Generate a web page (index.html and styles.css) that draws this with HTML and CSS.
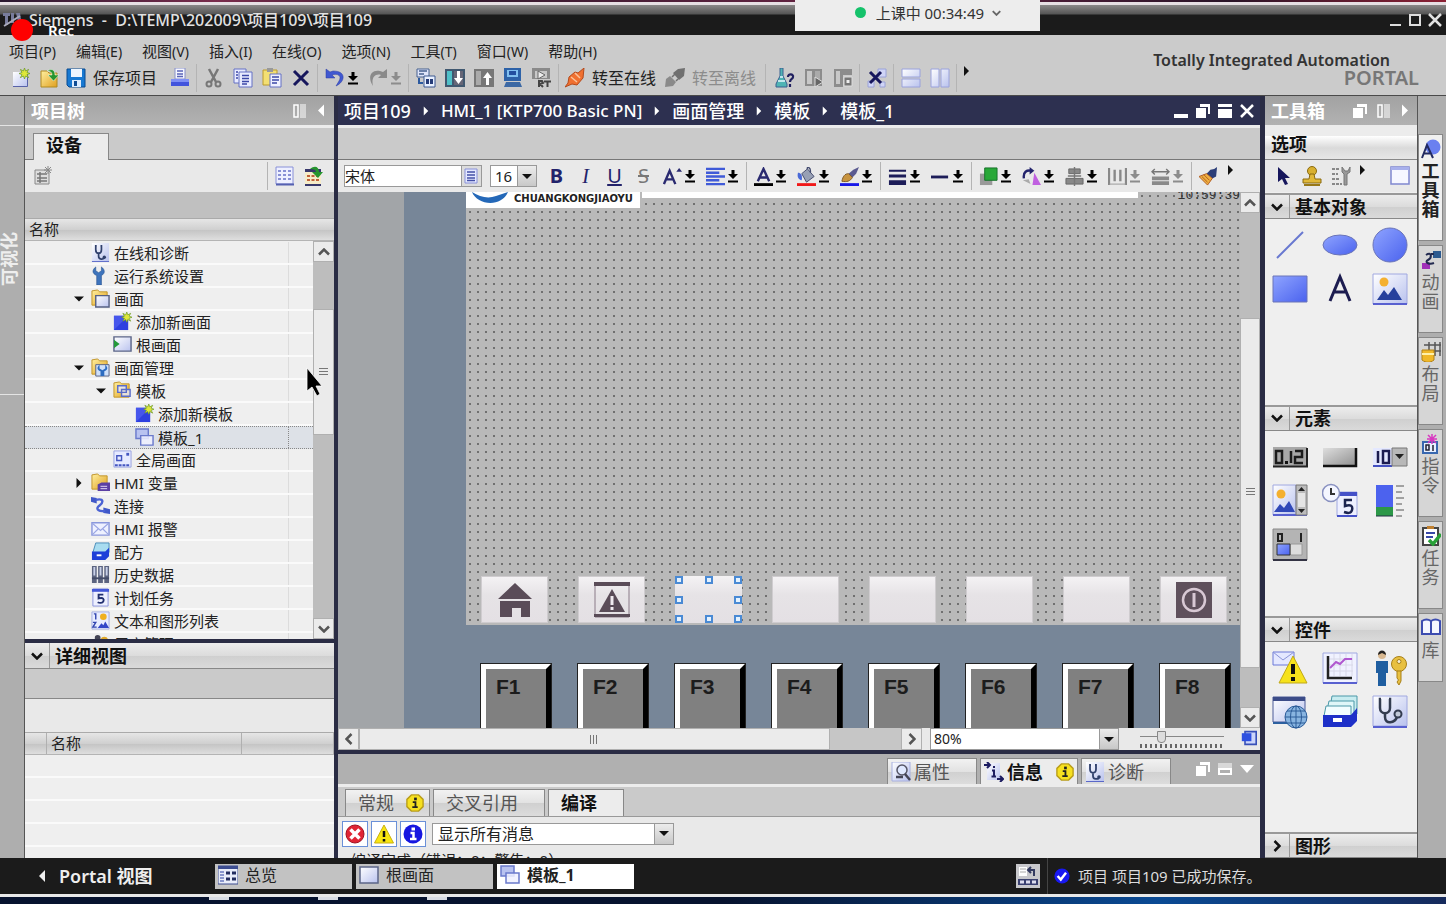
FILE: index.html
```html
<!DOCTYPE html>
<html lang="zh-CN">
  <head>
    <meta charset="UTF-8" />
    <meta name="viewport" content="width=device-width, initial-scale=1.0" />
    <title>Siemens - 项目109</title>
    <link rel="stylesheet" href="styles.css">
  </head>
  <body>
    <!-- icon sprite -->
    <svg class="sprite" width="0" height="0" aria-hidden="true">
      <defs>
        <linearGradient id="gBlue" x1="0" y1="0" x2="1" y2="1"><stop offset="0" stop-color="#8fa4ff" /><stop offset="1" stop-color="#4a62ee" /></linearGradient>
        <linearGradient id="gPale" x1="0" y1="0" x2="1" y2="1"><stop offset="0" stop-color="#ffffff" /><stop offset="1" stop-color="#b9c2ee" /></linearGradient>
        <linearGradient id="gGrey" x1="0" y1="0" x2="1" y2="1"><stop offset="0" stop-color="#dedede" /><stop offset="1" stop-color="#8e8e8e" /></linearGradient>
        <linearGradient id="gGold" x1="0" y1="0" x2="1" y2="1"><stop offset="0" stop-color="#fff0a0" /><stop offset="1" stop-color="#e0a020" /></linearGradient>
      </defs>
      <symbol id="i-drop" viewBox="0 0 10 14"><path d="M3.500 1h3v4H10L5 10 0 5h3.500zM0 11.500h10v2H0z" /></symbol>
      <symbol id="i-right" viewBox="0 0 8 12"><path d="M1 0l6 6-6 6z" /></symbol>
      <symbol id="i-left" viewBox="0 0 8 12"><path d="M7 0L1 6l6 6z" /></symbol>
      <symbol id="i-down" viewBox="0 0 12 8"><path d="M0 1h12L6 7z" /></symbol>
      <symbol id="i-chev" viewBox="0 0 12 8"><path d="M1 1.500l5 5 5-5" fill="none" stroke="currentColor" stroke-width="2.500" /></symbol>
      <symbol id="i-star" viewBox="0 0 12 12"><path d="M6 0l1.200 3.300L10.500 1.500 8.700 4.800 12 6 8.700 7.200l1.800 3.300-3.300-1.800L6 12 4.800 8.700 1.500 10.500l1.800-3.300L0 6l3.300-1.200L1.500 1.500l3.300 1.800z" fill="#dfe83a" stroke="#6c9a2a" stroke-width=".8" /></symbol>
      <symbol id="i-tia" viewBox="0 0 20 20"><path d="M1 3h7v3H6v9H3V6H1zM9 3h3v10H9zM14 3h4l2 13h-3z" fill="#787c9c" /><path d="M2 16L18 6" stroke="#aab" stroke-width="2" /></symbol>
      <symbol id="i-new" viewBox="0 0 20 20"><path d="M2 4h14v15H2z" fill="url(#gPale)" /><path d="M2 18.500h14.500V5" fill="none" stroke="#5862a8" /><use href="#i-star" x="8" y="0" width="11" height="11" /></symbol>
      <symbol id="i-open" viewBox="0 0 20 20"><path d="M1 3h6l2 2h8v14H1z" fill="url(#gGold)" stroke="#b08a20" /><path d="M7 3c5-3 8-1 8 4h4l-5.500 6L8 7h4c0-3-2-4-5-4z" fill="#27952f" stroke="#fff" stroke-width=".5" /></symbol>
      <symbol id="i-save" viewBox="0 0 20 20"><path d="M1 1h18v18H3l-2-2z" fill="#1879d2" stroke="#094a90" /><path d="M5 1h11v8H5z" fill="#eef6ff" /><path d="M6 12h9v7H6z" fill="#dcecff" /><path d="M8 13h3v5H8z" fill="#0f4c94" /></symbol>
      <symbol id="i-print" viewBox="0 0 20 20"><path d="M5 0h10v11H5z" fill="#f5f6ff" stroke="#8890c8" /><path d="M7 3h6M7 6h6M7 8.500h6" stroke="#5a64b8" stroke-width="1.500" /><path d="M1 11h18v7H1z" fill="#4254dd" /><path d="M1 11h18v3H1z" fill="#7f8ff5" /></symbol>
      <symbol id="i-cut" viewBox="0 0 20 20"><path d="M5 1l7 13M14 1L7 14" stroke="#777" stroke-width="2.500" /><circle cx="5" cy="16" r="2.500" fill="none" stroke="#777" stroke-width="2" /><circle cx="14" cy="16" r="2.500" fill="none" stroke="#777" stroke-width="2" /></symbol>
      <symbol id="i-copy" viewBox="0 0 20 20"><path d="M1 1h12v14H1z" fill="#e8ebff" stroke="#6470c4" /><path d="M6 4h13v15H6z" fill="#e8ebff" stroke="#6470c4" /><path d="M3 4h2M3 7h2M3 10h2M9 7.500h7M9 10.500h7M9 13.500h7M9 16h5" stroke="#3c48a8" stroke-width="1.500" /></symbol>
      <symbol id="i-paste" viewBox="0 0 20 20"><path d="M1 2h14v15H1z" fill="#f3df72" stroke="#bb9b2c" /><path d="M5 0h6v4H5z" fill="#999" /><path d="M8 6h11v13H8z" fill="#eef0ff" stroke="#6470c4" /><path d="M10 9h7M10 12h7M10 15h5" stroke="#3c48a8" stroke-width="1.500" /></symbol>
      <symbol id="i-x" viewBox="0 0 20 20"><path d="M3 3l14 14M17 3L3 17" stroke="#16165c" stroke-width="3" /></symbol>
      <symbol id="i-undo" viewBox="0 0 20 20"><path d="M1 1v9h9L7 7c6-2 10 1 7 6l-3 5c9-4 11-15-3-15L5 4z" fill="#4058d0" stroke="#2a3aa0" stroke-width=".5" /></symbol>
      <symbol id="i-redo" viewBox="0 0 20 20"><path d="M19 1v9h-9l3-3C7 5 3 10 5 18-1 9 3 1 12 3l3 1z" fill="#8a8a8a" /></symbol>
      <symbol id="i-compile" viewBox="0 0 20 20"><path d="M1 1h12v8H1z" fill="#dfe5fa" stroke="#47608f" /><path d="M3 3h8M3 6h5" stroke="#47608f" stroke-width="1.500" /><path d="M8 8h11v11H8z" fill="#e8f0ff" stroke="#3c5890" /><path d="M10 11h3v5h-3zM14 11h3v5h-3z" fill="#263c78" /><path d="M3 10v5h4" fill="none" stroke="#2c5aa0" stroke-width="2" /></symbol>
      <symbol id="i-load" viewBox="0 0 20 20"><path d="M0 1h20v18H0z" fill="#405870" /><path d="M2 3h5v14H2z" fill="#4fc0c8" /><path d="M9 3h9v14H9z" fill="#667" /><path d="M12 3h3v7h3l-4.500 6L9 10h3z" fill="#fff" /></symbol>
      <symbol id="i-upload" viewBox="0 0 20 20"><path d="M0 1h20v18H0z" fill="#777" /><path d="M2 3h5v14H2z" fill="#aaa" /><path d="M12 17h3v-7h3l-4.500-6L9 10h3z" fill="#fff" /></symbol>
      <symbol id="i-sim" viewBox="0 0 20 20"><path d="M1 0h17v13H1z" fill="#2d62a8" /><path d="M4 2h11v7H4z" fill="#80c0f0" /><path d="M6 3h7v4H6z" fill="#2350a0" /><path d="M3 14h14l2 5H1z" fill="#3b68a4" /></symbol>
      <symbol id="i-rt" viewBox="0 0 20 20"><path d="M0 0h18v11H0z" fill="#8a8a8a" /><path d="M3 3h12v7H3z" fill="#c8c8c8" /><path d="M6 3l7 4-7 4z" fill="#eee" stroke="#666" /><path d="M7 19v-6h3l1 2-3 1 3 3M12 13.500h7M15.500 14v5" fill="none" stroke="#444" stroke-width="2" /></symbol>
      <symbol id="i-plug" viewBox="0 0 20 20"><path d="M0 19l3-4 1-6 6-5 3 1 6-5-1 10-6 7-5-1z" fill="#f07030" stroke="#b44a1c" /><path d="M6 9l6 5M10 5l5 5" stroke="#fbc29a" stroke-width="1.500" /></symbol>
      <symbol id="i-unplug" viewBox="0 0 20 20"><path d="M0 19l1-8 4-3 6 6-3 4z" fill="#8a8a8a" /><path d="M8 5l5-4 7-1-1 8-5 4z" fill="#707070" /><path d="M7 9l3-3M11 13l2-2" stroke="#707070" stroke-width="1.500" /></symbol>
      <symbol id="i-diag" viewBox="0 0 20 20"><path d="M5 0h3v8l4 8v3H1v-3l4-8z" fill="#4fb4b4" stroke="#3a6090" /><path d="M3 13h7M5 9h3" stroke="#e9f9ff" stroke-width="1.500" /><path d="M13 9c0-4 6-3 5 0 0 2-3 2-3 5M15 16v3" fill="none" stroke="#202060" stroke-width="2.200" /></symbol>
      <symbol id="i-start" viewBox="0 0 20 20"><path d="M1 1h17v17H1z" fill="#8c8c8c" /><path d="M3 3h5v13H3z" fill="#c8c8c8" /><path d="M11 3h5v8h-5z" fill="#aaa" /><path d="M11 9l8 5-8 5z" fill="#666" stroke="#ddd" /></symbol>
      <symbol id="i-stop" viewBox="0 0 20 20"><path d="M1 1h18v6h-9v12H1z" fill="#8c8c8c" /><path d="M3 3h4v13H3z" fill="#c8c8c8" /><path d="M11 9h8v9h-8z" fill="#777" stroke="#ddd" /><path d="M13.500 12h3v3h-3z" fill="#eee" /></symbol>
      <symbol id="i-xref" viewBox="0 0 20 20"><path d="M11 1h8v8h-8zM1 13h6v6H1zM13 14h5v5h-5z" fill="#cfd4f6" stroke="#9aa2d8" /><path d="M3 4l11 11M14 4L3 15" stroke="#16165c" stroke-width="3" /></symbol>
      <symbol id="i-splith" viewBox="0 0 20 20"><path d="M1 1h18v8H1zM1 11h18v8H1z" fill="url(#gPale)" stroke="#9aa2dc" /></symbol>
      <symbol id="i-splitv" viewBox="0 0 20 20"><path d="M1 1h8v18H1zM11 1h8v18h-8z" fill="url(#gPale)" stroke="#9aa2dc" /></symbol>
      <symbol id="i-min" viewBox="0 0 14 14"><path d="M0 10h14v4H0z" /></symbol>
      <symbol id="i-float" viewBox="0 0 14 14"><path d="M4 0h10v10h-2V3H4z" /><path d="M0 4h10v10H0z" /></symbol>
      <symbol id="i-max" viewBox="0 0 14 14"><path d="M0 0h14v3H0zM0 5h14v9H0z" /></symbol>
      <symbol id="i-close" viewBox="0 0 14 14"><path d="M1 1l12 12M13 1L1 13" stroke="currentColor" stroke-width="2.500" /></symbol>
      <symbol id="i-dock" viewBox="0 0 14 14"><path d="M1 1h4v12H1z" fill="none" stroke="currentColor" stroke-width="1.500" /><path d="M7 0h6v14H7z" opacity=".5" /></symbol>
      <symbol id="i-treenew" viewBox="0 0 20 20"><path d="M2 4h14v14H2z" fill="#ddd" stroke="#888" /><path d="M4 8h10M4 12h10M4 15h10M7 6v11" stroke="#777" stroke-width="1.500" /><path d="M15 0v8M11 4h8M12 1l6 6M18 1l-6 6" stroke="#888" /></symbol>
      <symbol id="i-table" viewBox="0 0 20 20"><path d="M1 1h17v17H1z" fill="#eef0ff" stroke="#8890d8" /><path d="M1 18.500h18" stroke="#5560b0" stroke-width="2" /><path d="M3 5h13M3 9h13M3 13h13" stroke="#6872c8" stroke-width="1.500" stroke-dasharray="3 2" /></symbol>
      <symbol id="i-tableopen" viewBox="0 0 20 20"><path d="M1 3h16v16H1z" fill="#f6ecc8" /><path d="M1 3h16v3H1zM1 18h16v2H1z" fill="#38386c" /><path d="M3 10h12M3 14h12" stroke="#c06038" stroke-width="2" stroke-dasharray="3 1.500" /><path d="M6 3c5-4 9-2 9 3h4l-5 6-6-6h4c0-2-2-3-6-3z" fill="#27952f" /></symbol>
      <symbol id="i-steth" viewBox="0 0 20 20"><path d="M1 0h18v19H1z" fill="url(#gPale)" /><path d="M1 19.500h18" stroke="#5a68c8" /><path d="M6 3H5v4c0 5 6 5 6 0V3h-1M8 11v3c0 4 5 3 6 2" fill="none" stroke="#30406c" stroke-width="1.800" /><circle cx="14" cy="15" r="1.800" fill="#30406c" /></symbol>
      <symbol id="i-wrench" viewBox="0 0 20 20"><path d="M5 1v4l3 2 3-2V1c4 3 4 7 0 9v10H6V10C1 8 1 4 5 1z" fill="#3e74bc" stroke="#26508c" stroke-width=".6" /></symbol>
      <symbol id="i-folder" viewBox="0 0 20 20"><path d="M1 17V2l6-1 2 2h8v14z" fill="url(#gGold)" stroke="#c09428" /></symbol>
      <symbol id="i-fscreen" viewBox="0 0 20 20"><use href="#i-folder" /><path d="M5 7h14v12H5z" fill="url(#gPale)" stroke="#566084" stroke-width="1.500" /></symbol>
      <symbol id="i-fwrench" viewBox="0 0 20 20"><use href="#i-folder" /><path d="M5 7h14v12H5z" fill="#cfe0fa" stroke="#566084" /><path d="M9 7v4l3 2 3-2V7c3 3 3 5-1 7v5h-4v-5c-4-2-4-4-1-7z" fill="#2d6cc0" /></symbol>
      <symbol id="i-ftpl" viewBox="0 0 20 20"><use href="#i-folder" /><path d="M5 5h9v7H5zM9 9h9v7H9z" fill="#e8ecff" fill-opacity=".8" stroke="#5a6cc8" stroke-width="1.500" /></symbol>
      <symbol id="i-fvar" viewBox="0 0 20 20"><use href="#i-folder" /><path d="M7 12l4-2h9v9H7z" fill="#5b3fa4" /><path d="M10 14h7M10 16.500h7" stroke="#e8defa" /></symbol>
      <symbol id="i-add" viewBox="0 0 20 20"><path d="M1 4h15v15H1z" fill="#2e40e0" /><path d="M1 4h15L1 19z" fill="#4656ec" /><use href="#i-star" x="9" y="0" width="11" height="11" /></symbol>
      <symbol id="i-root" viewBox="0 0 20 20"><path d="M1 2h18v15H1z" fill="url(#gPale)" stroke="#5c6688" stroke-width="1.500" /><path d="M1 5l6 4.500L1 14z" fill="#249a3a" /></symbol>
      <symbol id="i-tpl" viewBox="0 0 20 20"><path d="M1 1h13v10H1z" fill="#b8c2f0" stroke="#6a7acc" stroke-width="1.500" /><path d="M6 8h13v10H6z" fill="#eef0ff" fill-opacity=".85" stroke="#6a7acc" stroke-width="1.500" /></symbol>
      <symbol id="i-global" viewBox="0 0 20 20"><path d="M1 1h18v17H1z" fill="#e6eaff" stroke="#98a2e0" /><path d="M4 6h5v5H4z" fill="none" stroke="#4456c0" stroke-width="1.500" /><path d="M14 3h3v3h-3z" fill="#4456c0" /><path d="M2 16h16" stroke="#4456c0" stroke-width="2" stroke-dasharray="3 1" /></symbol>
      <symbol id="i-conn" viewBox="0 0 20 20"><path d="M0 1l6 1v6L0 6zM13 12l7 2v5l-7-1z" fill="#4058c8" /><path d="M5 4c9-2 8 3 4 6s-3 6 6 6" fill="none" stroke="#4a62d4" stroke-width="2.500" /></symbol>
      <symbol id="i-mail" viewBox="0 0 20 20"><path d="M1 4h18v13H1z" fill="#eef1ff" stroke="#8a98dc" stroke-width="1.500" /><path d="M2 5l8 7 8-7M2 16l6-6M18 16l-6-6" fill="none" stroke="#9aa6e4" stroke-width="1.200" /></symbol>
      <symbol id="i-recipe" viewBox="0 0 20 20"><path d="M5 1h14v10H2z" fill="#a8dcf0" stroke="#4a8cb8" /><path d="M1 10h14l4-4v9l-4 4H1z" fill="#1e40d8" /><path d="M6 13h5v2H6z" fill="#fff" /></symbol>
      <symbol id="i-hist" viewBox="0 0 20 20"><path d="M1 1h5v18H1zM7.500 1h5v18h-5zM14 1h5v18h-5z" fill="#5c6480" /><path d="M2.500 2h2v9h-2zM9 2h2v9H9zM15.500 2h2v9h-2z" fill="#c8d0e8" /><path d="M1 13h18v2H1z" fill="#444c68" /></symbol>
      <symbol id="i-cal" viewBox="0 0 20 20"><path d="M2 1h16v18H2z" fill="#eef0ff" stroke="#8a94dc" /><path d="M1 1h18v3H1z" fill="#4458d8" /><path d="M13 7H8v4c5-1.500 6 1 5 3s-4 2-6 1" fill="none" stroke="#223070" stroke-width="2" /></symbol>
      <symbol id="i-list" viewBox="0 0 20 20"><path d="M1 1h18v18H1z" fill="#e8ecff" stroke="#a4aee0" /><path d="M3 3h2v6M2 12h3l-3 5h4" fill="none" stroke="#3346b0" stroke-width="1.500" /><circle cx="13" cy="6" r="3.500" fill="#f0b020" /><path d="M7 18l4-5 2 2 2-4 4 7z" fill="#3346c8" /></symbol>
      <symbol id="i-user" viewBox="0 0 20 20"><circle cx="7" cy="4" r="3" fill="#445" /><circle cx="14" cy="7" r="4" fill="#e0a828" /></symbol>
      <symbol id="i-bigger" viewBox="0 0 20 20"><path d="M1 18L7 4l6 14M3.500 13h7" fill="none" stroke="#2a2a70" stroke-width="2.500" /><path d="M14 5l3-4 3 4z" fill="#2a2a70" /></symbol>
      <symbol id="i-align" viewBox="0 0 20 20"><path d="M0 2h20M0 6h14M0 10h20M0 14h14M0 18h20" stroke="#3f5ad8" stroke-width="2.500" /></symbol>
      <symbol id="i-fontc" viewBox="0 0 20 20"><path d="M4 15l6-13 6 13M6 11h8" fill="none" stroke="#2a2a70" stroke-width="2.500" /><path d="M0 17h20v3H0z" fill="#000" /></symbol>
      <symbol id="i-fill" viewBox="0 0 20 20"><path d="M5 7l6-5 7 8-8 6z" fill="#98a0b4" stroke="#444c70" /><path d="M11 2c-1-3 4-2 3 4" fill="none" stroke="#444c70" stroke-width="1.500" /><path d="M1 6c3 0 5 2 4 8-4-1-5-4-4-8z" fill="#4a6ad8" /><path d="M0 17h20v3H0z" fill="#f01818" /></symbol>
      <symbol id="i-pen" viewBox="0 0 20 20"><path d="M20 0l-3 7-4 4-4-4 5-4z" fill="#5a5a90" /><path d="M9 7l4 4c-2 4-6 5-11 4 1-5 3-8 7-8z" fill="#c89440" stroke="#7a5420" /><path d="M0 17h20v3H0z" fill="#1818e8" /></symbol>
      <symbol id="i-lines" viewBox="0 0 20 20"><path d="M1 3h18v2H1zM1 8h18v3H1zM1 14h18v5H1z" fill="#1c1c58" /></symbol>
      <symbol id="i-dash" viewBox="0 0 20 20"><path d="M0 9h18v3H0z" fill="#1c1c58" /></symbol>
      <symbol id="i-order" viewBox="0 0 20 20"><path d="M1 7h13v12H1z" fill="#999" /><path d="M6 1h13v13H6z" fill="#28a838" stroke="#17722a" /></symbol>
      <symbol id="i-rot" viewBox="0 0 20 20"><path d="M11 19l2-13 7 13z" fill="#c060e0" /><path d="M9 18L1 14l6-1z" fill="#aaa" /><path d="M2 12C1 5 5 3 10 4" fill="none" stroke="#24246c" stroke-width="2.500" /><path d="M8 0l5 4-5 4z" fill="#24246c" /></symbol>
      <symbol id="i-center" viewBox="0 0 20 20"><path d="M4 2h12v5H4zM1 12h18v6H1z" fill="#888" stroke="#666" /><path d="M10 0v20M3 9.500h14" stroke="#777" stroke-width="1.500" /></symbol>
      <symbol id="i-dist" viewBox="0 0 20 20"><path d="M1 1v18M7 3v12M13 3v12M19 1v18" stroke="#888" stroke-width="2.500" /><path d="M1 18h18" stroke="#999" /></symbol>
      <symbol id="i-samew" viewBox="0 0 20 20"><path d="M1 10h18v4H1zM1 15h18v4H1z" fill="#8a8a8a" /><path d="M1 5h18M4 2L1 5l3 3M16 2l3 3-3 3" fill="none" stroke="#777" stroke-width="1.500" /></symbol>
      <symbol id="i-brush" viewBox="0 0 20 20"><path d="M19 0l-1 10-4 2-6-5 4-4 4-1z" fill="#2c3e78" /><path d="M8 7l6 5-5 7-9-9z" fill="#eeb040" stroke="#b05a20" /><path d="M3 10l6 6M5 8l6 6" stroke="#b05a20" /></symbol>
      <symbol id="i-cursor" viewBox="0 0 20 20"><path d="M5 1v15l4-3 3 6 3-1-3-6h5z" fill="#16165c" /></symbol>
      <symbol id="i-stamp" viewBox="0 0 20 20"><circle cx="10" cy="5" r="4.500" fill="#d8b030" stroke="#8a6a10" /><path d="M8 8h4l1 5h6v4H1v-4h6z" fill="#e0b838" stroke="#8a6a10" /><path d="M2 19h16" stroke="#987818" stroke-width="2" /></symbol>
      <symbol id="i-opts" viewBox="0 0 20 20"><path d="M1 3h8M1 8h6M1 13h8M1 18h10" stroke="#888" stroke-width="2" stroke-dasharray="3 1" /><path d="M11 1v5l2 2v11h3V8l3-2V1l-2 4h-3z" fill="#999" stroke="#777" /></symbol>
      <symbol id="i-window" viewBox="0 0 20 20"><path d="M1 1h18v17H1z" fill="#f6f7ff" stroke="#8088d0" stroke-width="1.500" /><path d="M1 1h18v3H1z" fill="#a8b0ec" /></symbol>
      <symbol id="i-lens" viewBox="0 0 20 20"><path d="M1 0h18v19H1z" fill="url(#gPale)" stroke="#a8b0e0" /><circle cx="11" cy="8" r="5" fill="#dfe8ff" stroke="#556" stroke-width="1.500" /><path d="M14 12l5 6M5 15h7" stroke="#445" stroke-width="2.500" /></symbol>
      <symbol id="i-msg" viewBox="0 0 20 20"><path d="M3 1h13v17H3z" fill="url(#gPale)" /><path d="M0 3h5M3 0l3 3-3 3M13 17h6M16 14l3 3-3 3" fill="none" stroke="#1c1c60" stroke-width="2" /><path d="M8 8.500h2v6M7.500 14.500H12" fill="none" stroke="#1c1c60" stroke-width="2" /><path d="M9 4h2v2H9z" fill="#1c1c60" /></symbol>
      <symbol id="i-info" viewBox="0 0 20 20"><path d="M6 1h8l5 5v8l-5 5H6l-5-5V6z" fill="#f6e020" stroke="#b89c18" stroke-width="1.500" /><path d="M7.500 9h3v5.500M7 14.500h6" fill="none" stroke="#222" stroke-width="2" /><path d="M9 4h3v3H9z" fill="#222" /></symbol>
      <symbol id="i-err" viewBox="0 0 20 20"><circle cx="10" cy="10" r="9" fill="#e02434" stroke="#a01020" /><path d="M5.500 5.500l9 9M14.500 5.500l-9 9" stroke="#fff" stroke-width="3.500" /></symbol>
      <symbol id="i-warn" viewBox="0 0 20 20"><path d="M10 1l9.500 18H.5z" fill="#f8e610" stroke="#c8b010" /><path d="M10 7v6M10 15v2.500" stroke="#111" stroke-width="2.500" /></symbol>
      <symbol id="i-note" viewBox="0 0 20 20"><circle cx="10" cy="10" r="9.500" fill="#1616e0" /><path d="M7.500 9h3v6M7 15h6.500" fill="none" stroke="#fff" stroke-width="2.500" /><path d="M8.500 3.500h3.500v3H8.500z" fill="#fff" /></symbol>
      <symbol id="i-ok" viewBox="0 0 20 20"><circle cx="10" cy="10" r="9.500" fill="#1818f0" /><path d="M4.500 10l4 4.500L15 6" fill="none" stroke="#fff" stroke-width="3" /></symbol>
      <symbol id="i-overview" viewBox="0 0 20 20"><path d="M0 1h20v18H0z" fill="#e8ecfa" stroke="#3c4c90" /><path d="M0 1h20v3H0z" fill="#3c4c90" /><path d="M2 7h4M2 10h4M2 13h4M2 16h4" stroke="#6a7ac0" stroke-width="1.500" /><path d="M8 8h4M14 8h4M8 14h4M14 14h4" stroke="#222c60" stroke-width="3" /></symbol>
      <symbol id="i-screen" viewBox="0 0 20 20"><path d="M1 2h18v16H1z" fill="url(#gPale)" stroke="#5c6688" stroke-width="1.500" /></symbol>
      <symbol id="i-layout" viewBox="0 0 24 24"><path d="M0 0h24v24H0z" fill="#c8c8cc" /><path d="M3 3h8v9H3z" fill="#fff" /><path d="M4 5h6M4 8h6" stroke="#aaa" /><path d="M13 6h5v6M15 3l-3 3 3 3" fill="none" stroke="#333a60" stroke-width="2" /><path d="M2 15h20v6H2z" fill="#3a4070" /><path d="M4 18h16" stroke="#dde" stroke-width="3" stroke-dasharray="4 2" /></symbol>
      <symbol id="i-fit" viewBox="0 0 20 20"><path d="M5 2h14v16H5z" fill="#cdd6fa" stroke="#3850b8" stroke-width="2" /><path d="M1 4h12v10H1z" fill="#2e50e0" /></symbol>
      <!-- toolbox objects -->
      <symbol id="o-line" viewBox="0 0 36 36"><path d="M5 31L31 5" stroke="#6878d0" stroke-width="2" /></symbol>
      <symbol id="o-ellipse" viewBox="0 0 36 36"><ellipse cx="18" cy="18" rx="17" ry="10" fill="url(#gBlue)" stroke="#6a74b8" /></symbol>
      <symbol id="o-circle" viewBox="0 0 36 36"><circle cx="18" cy="18" r="17" fill="url(#gBlue)" stroke="#6a74b8" /></symbol>
      <symbol id="o-rect" viewBox="0 0 36 36"><path d="M1 5h34v26H1z" fill="url(#gBlue)" stroke="#6a74b8" /></symbol>
      <symbol id="o-text" viewBox="0 0 36 36"><path d="M8 30L18 6l10 24M12 21h12" fill="none" stroke="#1c1c50" stroke-width="3" /></symbol>
      <symbol id="o-image" viewBox="0 0 36 36"><path d="M1 3h34v30H1z" fill="url(#gPale)" stroke="#a0a8e0" /><path d="M1 32h34v2H1z" fill="#5860d0" /><circle cx="12" cy="11" r="4.500" fill="#f4b030" /><path d="M5 29l7-10 4 5 6-8 8 13z" fill="#26409c" /></symbol>
      <symbol id="o-io" viewBox="0 0 36 36"><path d="M1 8h34v20H1z" fill="#a8a8a8" /><path d="M1 27.500h34V9" fill="none" stroke="#222" stroke-width="2" /><path d="M4 12h6v12H4zM19 12v12M23 12h7v6h-7v6h8" fill="none" stroke="#1c1c1c" stroke-width="2.500" /><path d="M13 22h3v3h-3z" fill="#111" /></symbol>
      <symbol id="o-button" viewBox="0 0 36 36"><path d="M1 9h34v18H1z" fill="url(#gGrey)" /><path d="M1 27h33V9" fill="none" stroke="#111" stroke-width="2.500" /></symbol>
      <symbol id="o-symio" viewBox="0 0 36 36"><path d="M1 9h19v17H1z" fill="#e4e8ff" /><path d="M1 27h19" stroke="#4450c0" stroke-width="2" /><path d="M6 12v12M11 12h6v12h-6z" fill="none" stroke="#1c1c50" stroke-width="2.500" /><path d="M20 9h15v18H20z" fill="#b8b8b8" stroke="#777" /><path d="M23 15h9l-4.500 5z" /></symbol>
      <symbol id="o-symimg" viewBox="0 0 36 36"><path d="M1 2h23v30H1z" fill="url(#gPale)" stroke="#a0a8e0" /><path d="M1 31h34v2H1z" fill="#5860d0" /><circle cx="9" cy="11" r="4.500" fill="#f4b030" /><path d="M2 29l6-8 4 4 5-7 6 11z" fill="#3048b8" /><path d="M24 2h11v30H24z" fill="#bbb" stroke="#777" /><path d="M26 10h7v14h-7z" fill="#e4e4e4" /><path d="M26 8l3.500-4L33 8zM26 26l3.500 4 3.500-4z" /></symbol>
      <symbol id="o-date" viewBox="0 0 36 36"><path d="M15 9h20v24H15z" fill="#eef0ff" stroke="#a0a8e0" /><path d="M15 9h20v4H15zM15 32h20v2H15z" fill="#4450c8" /><path d="M30 17h-7v6c6-2 8 0 7 4s-5 3-8 2" fill="none" stroke="#1c2450" stroke-width="2.500" /><circle cx="9" cy="10" r="8.500" fill="#f4f6ff" stroke="#8890c0" stroke-width="1.500" /><path d="M9 5v6h4" fill="none" stroke="#333" stroke-width="2" /></symbol>
      <symbol id="o-bar" viewBox="0 0 36 36"><path d="M4 2h17v23H4z" fill="#4c62ee" /><path d="M4 24h17v9H4z" fill="#2c9848" /><path d="M4 33h17" stroke="#234" /><path d="M24 3h8M24 9h6M24 15h8M24 21h6M24 27h8M24 33h6" stroke="#555" /></symbol>
      <symbol id="o-switch" viewBox="0 0 36 36"><path d="M1 2h34v31H1z" fill="#b4b4b4" stroke="#888" /><path d="M1 33h34" stroke="#334" stroke-width="2" /><path d="M6 7h4v7H6zM29 6v9" fill="none" stroke="#222" stroke-width="2" /><path d="M18 17h12v11H18z" fill="#ddd" stroke="#999" /><path d="M5 17h13v11H5z" fill="url(#gBlue)" stroke="#333" /></symbol>
      <symbol id="o-alarm" viewBox="0 0 36 36"><path d="M1 2h21v13H1z" fill="#e4e8ff" stroke="#6a78d8" /><path d="M1 2l10 8L22 2" fill="none" stroke="#8a94d8" /><path d="M21 6l14 27H7z" fill="#f6e21c" stroke="#c0a818" /><path d="M21 14v10M21 27v4" stroke="#111" stroke-width="4" /></symbol>
      <symbol id="o-trend" viewBox="0 0 36 36"><path d="M1 3h34v30H1z" fill="#f0f2ff" stroke="#a0a8e0" /><path d="M12 4v22M18 4v22M24 4v22M30 4v22M7 9h24M7 15h24M7 21h24" stroke="#d8d8e8" /><path d="M1 33h34" stroke="#5860d0" stroke-width="2" /><path d="M6 6v22h24" fill="none" stroke="#222" stroke-width="2.500" /><path d="M8 18l6-6 4 2 5-5h7" fill="none" stroke="#b058d0" stroke-width="2" /></symbol>
      <symbol id="o-user" viewBox="0 0 36 36"><circle cx="10" cy="5" r="4" fill="#d8b890" /><path d="M6 5c0-6 8-6 8 0L10 3z" fill="#222" /><path d="M4 11h12v12h-2v13H6V23H4z" fill="#1f5ea0" /><circle cx="27" cy="14" r="7.500" fill="#e8c040" stroke="#a88018" /><circle cx="27" cy="11.500" r="2" fill="#f6f0d8" stroke="#a88018" /><path d="M25 21h4v10l-2 4-2-3 1.500-2-1.500-2z" fill="#e8c040" stroke="#a88018" /></symbol>
      <symbol id="o-web" viewBox="0 0 36 36"><path d="M1 3h32v25H1z" fill="url(#gPale)" stroke="#4a5a98" /><path d="M1 3h32v4H1z" fill="#3c4c88" /><path d="M1 29h20" stroke="#2c60a0" stroke-width="2" /><circle cx="24" cy="23" r="11" fill="#88b4e0" stroke="#2c5c98" /><path d="M13 23h22M24 12v22M15 17h18M15 29h18" stroke="#2c5c98" /><ellipse cx="24" cy="23" rx="5.500" ry="11" fill="none" stroke="#2c5c98" /></symbol>
      <symbol id="o-recipe" viewBox="0 0 36 36"><path d="M10 2h25v18H7z" fill="#c8ecf0" stroke="#4a98a8" /><path d="M7 7h25v14H4z" fill="#dff6f8" stroke="#4a98a8" /><path d="M4 12h25v10H2z" fill="#f2fdff" stroke="#4a98a8" /><path d="M1 21h28l6-7v13l-6 6H1z" fill="#1e30c8" /><path d="M11 24h9v4h-9z" fill="#fff" /></symbol>
      <symbol id="o-diag" viewBox="0 0 36 36"><path d="M1 2h34v30H1z" fill="url(#gPale)" stroke="#a0a8e0" /><path d="M1 33h34" stroke="#5860d0" stroke-width="2" /><path d="M9 5H8v9c0 7 10 7 10 0V5h-1M13 19v4c0 8 10 6 12 0" fill="none" stroke="#333c50" stroke-width="2.500" /><circle cx="26" cy="20" r="3.500" fill="#c0c8d8" stroke="#333c50" stroke-width="2" /></symbol>
      <!-- side tabs -->
      <symbol id="t-tools" viewBox="0 0 20 20"><circle cx="12" cy="8" r="7.500" fill="#6a80f0" /><path d="M1 19L6 6l6 13M3 14.500h6" fill="none" stroke="#222a60" stroke-width="2" /></symbol>
      <symbol id="t-anim" viewBox="0 0 20 20"><path d="M12 1h8v7h-8z" fill="#2c5a90" /><path d="M1 13h8v6H1z" fill="#a030b8" /><path d="M5 5c6-4 6 3 2 5s1 5 6 3M10 4h3" fill="none" stroke="#222a50" stroke-width="2" /></symbol>
      <symbol id="t-layout" viewBox="0 0 20 20"><path d="M3 3h17M3 9h17M8 0v14M14 0v14M19 0v14" stroke="#555" stroke-width="1.500" /><path d="M1 8h12v10c-4 3-8 3-12 0z" fill="#f0b828" stroke="#b08018" /><path d="M1 12h12" stroke="#fff0a8" stroke-width="2" /></symbol>
      <symbol id="t-instr" viewBox="0 0 20 20"><path d="M2 8h14v11H2z" fill="#e8f0ff" stroke="#3868b0" stroke-width="2" /><path d="M5 11h3v5H5zM12 11v6" fill="none" stroke="#223" stroke-width="1.500" /><path d="M11 0v10M6 5h10M7 1l8 8M15 1L7 9" stroke="#d838c0" stroke-width="1.500" /></symbol>
      <symbol id="t-task" viewBox="0 0 20 20"><path d="M2 2h15v17H2z" fill="#fff" stroke="#444" stroke-width="2" /><path d="M6 0h7v3H6z" fill="#c08030" /><path d="M5 7h9M5 11h7" stroke="#3848a8" stroke-width="2" /><path d="M8 14l4 4 8-10" fill="none" stroke="#28a038" stroke-width="3.500" /></symbol>
      <symbol id="t-lib" viewBox="0 0 20 20"><path d="M1 3c3-2 6-2 9 0 3-2 6-2 9 0v13H1z" fill="#f4f6ff" stroke="#3c4cb0" stroke-width="2" /><path d="M10 3v13" stroke="#3c4cb0" stroke-width="2" /></symbol>
    </svg>

    <div class="desk-top"></div>

    <header class="titlebar">
      <svg class="icon"><use href="#i-tia" /></svg>
      <span class="app-title">Siemens&nbsp; - &nbsp;D:\TEMP\202009\项目109\项目109</span>
      <div class="win-controls">
        <button class="plain" aria-label="最小化"><svg class="ico14" viewBox="0 0 14 14"><path d="M2 12h11" stroke="#ddd" stroke-width="2" /></svg></button>
        <button class="plain" aria-label="最大化"><svg class="ico14" viewBox="0 0 14 14"><path d="M2 2h10v10H2z" fill="none" stroke="#ddd" stroke-width="2" /></svg></button>
        <button class="plain" aria-label="关闭"><svg class="ico14"><use href="#i-close" /></svg></button>
      </div>
      <div class="rec"><span class="rec-dot"></span>Rec</div>
      <div class="class-pill"><span class="live-dot"></span>上课中 00:34:49 <svg class="pill-chev"><use href="#i-chev" /></svg></div>
    </header>

    <div class="command-area">
      <div class="commands">
        <nav class="menu">
          <button class="plain">项目<small>(P)</small></button>
          <button class="plain">编辑<small>(E)</small></button>
          <button class="plain">视图<small>(V)</small></button>
          <button class="plain">插入<small>(I)</small></button>
          <button class="plain">在线<small>(O)</small></button>
          <button class="plain">选项<small>(N)</small></button>
          <button class="plain">工具<small>(T)</small></button>
          <button class="plain">窗口<small>(W)</small></button>
          <button class="plain">帮助<small>(H)</small></button>
        </nav>
        <div class="toolbar main-tools">
          <button class="tool" aria-label="新建"><svg class="icon"><use href="#i-new" /></svg></button>
          <button class="tool" aria-label="打开"><svg class="icon"><use href="#i-open" /></svg></button>
          <button class="tool text-tool"><svg class="icon"><use href="#i-save" /></svg>保存项目</button>
          <button class="tool" aria-label="打印"><svg class="icon"><use href="#i-print" /></svg></button>
          <i class="sep"></i>
          <button class="tool" aria-label="剪切"><svg class="icon"><use href="#i-cut" /></svg></button>
          <button class="tool" aria-label="复制"><svg class="icon"><use href="#i-copy" /></svg></button>
          <button class="tool" aria-label="粘贴"><svg class="icon"><use href="#i-paste" /></svg></button>
          <button class="tool" aria-label="删除"><svg class="icon"><use href="#i-x" /></svg></button>
          <i class="sep"></i>
          <button class="tool split" aria-label="撤消"><svg class="icon"><use href="#i-undo" /></svg><svg class="drop"><use href="#i-drop" /></svg></button>
          <button class="tool split off" aria-label="重做"><svg class="icon"><use href="#i-redo" /></svg><svg class="drop"><use href="#i-drop" /></svg></button>
          <i class="sep"></i>
          <button class="tool" aria-label="编译"><svg class="icon"><use href="#i-compile" /></svg></button>
          <button class="tool" aria-label="下载"><svg class="icon"><use href="#i-load" /></svg></button>
          <button class="tool" aria-label="上传"><svg class="icon"><use href="#i-upload" /></svg></button>
          <button class="tool" aria-label="仿真"><svg class="icon"><use href="#i-sim" /></svg></button>
          <button class="tool" aria-label="运行系统"><svg class="icon"><use href="#i-rt" /></svg></button>
          <i class="sep"></i>
          <button class="tool text-tool online"><svg class="icon"><use href="#i-plug" /></svg>转至在线</button>
          <button class="tool text-tool online off"><svg class="icon"><use href="#i-unplug" /></svg>转至离线</button>
          <i class="sep wide"></i>
          <button class="tool" aria-label="可访问的设备"><svg class="icon"><use href="#i-diag" /></svg></button>
          <button class="tool" aria-label="启动"><svg class="icon"><use href="#i-start" /></svg></button>
          <button class="tool" aria-label="停止"><svg class="icon"><use href="#i-stop" /></svg></button>
          <i class="sep"></i>
          <button class="tool" aria-label="交叉引用"><svg class="icon"><use href="#i-xref" /></svg></button>
          <i class="sep"></i>
          <button class="tool" aria-label="水平拆分"><svg class="icon"><use href="#i-splith" /></svg></button>
          <button class="tool" aria-label="垂直拆分"><svg class="icon"><use href="#i-splitv" /></svg></button>
          <i class="sep"></i>
          <svg class="more"><use href="#i-right" /></svg>
        </div>
      </div>
      <div class="brand">
        <div class="brand-name">Totally Integrated Automation</div>
        <div class="brand-portal">PORTAL</div>
      </div>
    </div>

    <main class="work">
      <aside class="left-rail"><span class="rail-label">可视化</span></aside>

      <section class="tree-panel">
        <div class="panel-head">
          <h2>项目树</h2>
          <svg class="ico14"><use href="#i-dock" /></svg>
          <svg class="head-arrow"><use href="#i-left" /></svg>
        </div>
        <div class="tab-strip"><button class="tab device-tab">设备</button></div>
        <div class="toolbar tree-tools">
          <button class="tool" aria-label="新建组"><svg class="icon"><use href="#i-treenew" /></svg></button>
          <i class="sep push"></i>
          <button class="tool" aria-label="列表"><svg class="icon"><use href="#i-table" /></svg></button>
          <button class="tool" aria-label="打开列表"><svg class="icon"><use href="#i-tableopen" /></svg></button>
        </div>
        <div class="filler"></div>
        <div class="tree-area">
          <div class="tree-main">
            <div class="col-head"><span>名称</span></div>
            <ul class="tree">
              <li class="lv1"><svg class="icon"><use href="#i-steth" /></svg>在线和诊断</li>
              <li class="lv1"><svg class="icon"><use href="#i-wrench" /></svg>运行系统设置</li>
              <li class="lv1"><svg class="twist"><use href="#i-down" /></svg><svg class="icon"><use href="#i-fscreen" /></svg>画面</li>
              <li class="lv2"><svg class="icon"><use href="#i-add" /></svg>添加新画面</li>
              <li class="lv2"><svg class="icon"><use href="#i-root" /></svg>根画面</li>
              <li class="lv1"><svg class="twist"><use href="#i-down" /></svg><svg class="icon"><use href="#i-fwrench" /></svg>画面管理</li>
              <li class="lv2"><svg class="twist"><use href="#i-down" /></svg><svg class="icon"><use href="#i-ftpl" /></svg>模板</li>
              <li class="lv3"><svg class="icon"><use href="#i-add" /></svg>添加新模板</li>
              <li class="lv3 selected"><svg class="icon"><use href="#i-tpl" /></svg>模板_1</li>
              <li class="lv2"><svg class="icon"><use href="#i-global" /></svg>全局画面</li>
              <li class="lv1"><svg class="twist"><use href="#i-right" /></svg><svg class="icon"><use href="#i-fvar" /></svg>HMI 变量</li>
              <li class="lv1"><svg class="icon"><use href="#i-conn" /></svg>连接</li>
              <li class="lv1"><svg class="icon"><use href="#i-mail" /></svg>HMI 报警</li>
              <li class="lv1"><svg class="icon"><use href="#i-recipe" /></svg>配方</li>
              <li class="lv1"><svg class="icon"><use href="#i-hist" /></svg>历史数据</li>
              <li class="lv1"><svg class="icon"><use href="#i-cal" /></svg>计划任务</li>
              <li class="lv1"><svg class="icon"><use href="#i-list" /></svg>文本和图形列表</li>
              <li class="lv1"><svg class="icon"><use href="#i-user" /></svg>用户管理</li>
            </ul>
          </div>
          <div class="vscroll tree-scroll">
            <div class="col-head"></div>
            <span class="sbtn up"><svg><use href="#i-chev" /></svg></span>
            <span class="track tree-before"></span>
            <span class="thumb tree-thumb"></span>
            <span class="track grow"></span>
            <span class="sbtn"><svg><use href="#i-chev" /></svg></span>
          </div>
          <svg class="mouse" viewBox="0 0 18 30"><path d="M2 1v23l5-4 5 9 3-2-4-8h6z" fill="#000" stroke="#fff" stroke-width=".8" /></svg>
        </div>
        <div class="section-head detail-head"><span class="fold"><svg><use href="#i-chev" /></svg></span><h3>详细视图</h3></div>
        <div class="detail-gap"></div>
        <div class="detail-tools"></div>
        <div class="col-head detail-cols"><span></span><span>名称</span><span></span></div>
        <div class="detail-rows"></div>
      </section>

      <section class="editor">
        <div class="panel-head editor-head">
          <h2>项目109<svg><use href="#i-right" /></svg><span class="device-name">HMI_1 [KTP700 Basic PN]</span><svg><use href="#i-right" /></svg>画面管理<svg><use href="#i-right" /></svg>模板<svg><use href="#i-right" /></svg>模板_1</h2>
          <svg class="ico14"><use href="#i-min" /></svg>
          <svg class="ico14"><use href="#i-float" /></svg>
          <svg class="ico14"><use href="#i-max" /></svg>
          <svg class="ico14"><use href="#i-close" /></svg>
        </div>
        <div class="tab-strip"></div>
        <div class="toolbar format-tools">
          <div class="combo font-combo">
            <input type="text" value="宋体" aria-label="字体" />
            <button class="list-btn" aria-label="选择字体"><svg viewBox="0 0 14 16"><path d="M1 1h12v14H1z" fill="#e4e8ff" stroke="#8890d8" /><path d="M3 4h8M3 7h8M3 10h8M3 12.500h8" stroke="#4450a8" stroke-width="1.500" /></svg></button>
          </div>
          <div class="combo size-combo">
            <select aria-label="字号"><option>16</option></select>
            <span class="combo-arrow"><svg><use href="#i-down" /></svg></span>
          </div>
          <button class="letter bold">B</button>
          <button class="letter italic">I</button>
          <button class="letter under">U</button>
          <button class="letter strike">S</button>
          <button class="tool split" aria-label="增大字号"><svg class="icon"><use href="#i-bigger" /></svg><svg class="drop"><use href="#i-drop" /></svg></button>
          <button class="tool split" aria-label="对齐"><svg class="icon"><use href="#i-align" /></svg><svg class="drop"><use href="#i-drop" /></svg></button>
          <i class="sep"></i>
          <button class="tool split" aria-label="文本颜色"><svg class="icon"><use href="#i-fontc" /></svg><svg class="drop"><use href="#i-drop" /></svg></button>
          <button class="tool split" aria-label="背景色"><svg class="icon"><use href="#i-fill" /></svg><svg class="drop"><use href="#i-drop" /></svg></button>
          <button class="tool split" aria-label="边框颜色"><svg class="icon"><use href="#i-pen" /></svg><svg class="drop"><use href="#i-drop" /></svg></button>
          <i class="sep"></i>
          <button class="tool split" aria-label="线宽"><svg class="icon"><use href="#i-lines" /></svg><svg class="drop"><use href="#i-drop" /></svg></button>
          <button class="tool split" aria-label="线型"><svg class="icon"><use href="#i-dash" /></svg><svg class="drop"><use href="#i-drop" /></svg></button>
          <i class="sep"></i>
          <button class="tool split" aria-label="顺序"><svg class="icon"><use href="#i-order" /></svg><svg class="drop"><use href="#i-drop" /></svg></button>
          <button class="tool split" aria-label="旋转"><svg class="icon"><use href="#i-rot" /></svg><svg class="drop"><use href="#i-drop" /></svg></button>
          <button class="tool split" aria-label="居中"><svg class="icon"><use href="#i-center" /></svg><svg class="drop"><use href="#i-drop" /></svg></button>
          <button class="tool split off" aria-label="分布"><svg class="icon"><use href="#i-dist" /></svg><svg class="drop"><use href="#i-drop" /></svg></button>
          <button class="tool split off" aria-label="同宽"><svg class="icon"><use href="#i-samew" /></svg><svg class="drop"><use href="#i-drop" /></svg></button>
          <i class="sep"></i>
          <button class="tool" aria-label="格式刷"><svg class="icon"><use href="#i-brush" /></svg></button>
          <svg class="more"><use href="#i-right" /></svg>
        </div>

        <div class="canvas-row">
          <div class="canvas">
            <div class="device">
              <div class="screen">
                <div class="screen-top">
                  <div class="logo">
                    <svg viewBox="0 0 42 14"><path d="M4 0c5 13 29 16 36 0L28 4C20 7 12 5 4 0z" fill="#2468b8" /></svg>
                    <span>CHUANGKONGJIAOYU</span>
                  </div>
                  <div class="title-field"></div>
                  <div class="clock">10:59:39</div>
                </div>
                <div class="softkeys">
                  <div class="softkey"><svg viewBox="0 0 36 36"><path d="M18 1L35 17H1zM3 19h30v16h-9V26h-9v9H3z" fill="#5a4c58" /></svg></div>
                  <div class="softkey"><svg viewBox="0 0 36 36"><path d="M1 1h34v34H1z" fill="none" stroke="#8a7a88" /><path d="M0 0h36v4H0zM0 32h36v3H0z" fill="#5a4c58" /><path d="M18 7l13 23H5z" fill="#5a4c58" /><path d="M18 14v9M18 25v3" stroke="#efeaef" stroke-width="3" /></svg></div>
                  <div class="softkey picked"><i></i><i></i><i></i><i></i><i class="mid"></i><i></i><i></i><i></i><i></i></div>
                  <div class="softkey"></div>
                  <div class="softkey"></div>
                  <div class="softkey"></div>
                  <div class="softkey"></div>
                  <div class="softkey"><svg viewBox="0 0 36 36"><path d="M0 0h36v36H0z" fill="#5f505c" /><circle cx="18" cy="18" r="11" fill="none" stroke="#d8c8d4" stroke-width="2.500" /><path d="M18 11v14" stroke="#d8c8d4" stroke-width="3" /></svg></div>
                </div>
              </div>
              <div class="fkeys">
                <div class="fkey">F1</div>
                <div class="fkey">F2</div>
                <div class="fkey">F3</div>
                <div class="fkey">F4</div>
                <div class="fkey">F5</div>
                <div class="fkey">F6</div>
                <div class="fkey">F7</div>
                <div class="fkey">F8</div>
              </div>
            </div>
          </div>
          <div class="vscroll">
            <span class="sbtn up"><svg><use href="#i-chev" /></svg></span>
            <span class="track canvas-before"></span>
            <span class="thumb canvas-thumb"></span>
            <span class="track canvas-after"></span>
            <span class="sbtn"><svg><use href="#i-chev" /></svg></span>
          </div>
        </div>
        <div class="zoom-row">
          <div class="hscroll">
            <span class="sbtn left"><svg><use href="#i-chev" /></svg></span>
            <span class="thumb h-thumb"></span>
            <span class="track"></span>
            <span class="sbtn right"><svg><use href="#i-chev" /></svg></span>
          </div>
          <div class="combo zoom-combo">
            <select aria-label="缩放"><option>80%</option></select>
            <span class="combo-arrow"><svg><use href="#i-down" /></svg></span>
          </div>
          <div class="zoom-slider"><input type="range" min="0" max="100" value="23" aria-label="缩放比例" /></div>
          <svg class="fit"><use href="#i-fit" /></svg>
        </div>

        <div class="info-tabs">
          <button class="tab"><svg class="icon"><use href="#i-lens" /></svg>属性</button>
          <button class="tab active"><svg class="icon"><use href="#i-msg" /></svg>信息<svg class="icon badge"><use href="#i-info" /></svg></button>
          <button class="tab"><svg class="icon"><use href="#i-steth" /></svg>诊断</button>
          <div class="info-controls">
            <svg class="ico14"><use href="#i-float" /></svg>
            <svg class="ico14" viewBox="0 0 14 14"><path d="M0 1h14v5H0z" opacity=".5" /><path d="M1 7h12v5H1z" fill="none" stroke="currentColor" stroke-width="2" /></svg>
            <svg class="ico14" viewBox="0 0 14 14"><path d="M0 3h14L7 11z" /></svg>
          </div>
        </div>
        <div class="sub-tabs">
          <button class="tab">常规<svg class="icon badge"><use href="#i-info" /></svg></button>
          <button class="tab">交叉引用</button>
          <button class="tab active">编译</button>
        </div>
        <div class="message-tools">
          <button class="filter" aria-label="错误"><svg class="icon"><use href="#i-err" /></svg></button>
          <button class="filter" aria-label="警告"><svg class="icon"><use href="#i-warn" /></svg></button>
          <button class="filter" aria-label="信息"><svg class="icon"><use href="#i-note" /></svg></button>
          <div class="combo message-combo">
            <select aria-label="消息筛选"><option>显示所有消息</option></select>
            <span class="combo-arrow"><svg><use href="#i-down" /></svg></span>
          </div>
        </div>
        <div class="message-line">编译完成（错误：0；警告：0）</div>
      </section>

      <section class="toolbox">
        <div class="panel-head">
          <h2>工具箱</h2>
          <svg class="ico14"><use href="#i-float" /></svg>
          <svg class="ico14"><use href="#i-dock" /></svg>
          <svg class="head-arrow"><use href="#i-right" /></svg>
        </div>
        <div class="options-head">选项</div>
        <div class="toolbar box-tools">
          <button class="tool" aria-label="选择"><svg class="icon"><use href="#i-cursor" /></svg></button>
          <button class="tool" aria-label="图章"><svg class="icon"><use href="#i-stamp" /></svg></button>
          <button class="tool" aria-label="设置"><svg class="icon"><use href="#i-opts" /></svg></button>
          <svg class="more"><use href="#i-right" /></svg>
          <button class="tool push" aria-label="窗格"><svg class="icon"><use href="#i-window" /></svg></button>
        </div>
        <div class="section-head"><span class="fold"><svg><use href="#i-chev" /></svg></span><h3>基本对象</h3></div>
        <div class="objects">
          <svg><use href="#o-line" /></svg>
          <svg><use href="#o-ellipse" /></svg>
          <svg><use href="#o-circle" /></svg>
          <svg><use href="#o-rect" /></svg>
          <svg><use href="#o-text" /></svg>
          <svg><use href="#o-image" /></svg>
        </div>
        <div class="section-head"><span class="fold"><svg><use href="#i-chev" /></svg></span><h3>元素</h3></div>
        <div class="objects">
          <svg><use href="#o-io" /></svg>
          <svg><use href="#o-button" /></svg>
          <svg><use href="#o-symio" /></svg>
          <svg><use href="#o-symimg" /></svg>
          <svg><use href="#o-date" /></svg>
          <svg><use href="#o-bar" /></svg>
          <svg><use href="#o-switch" /></svg>
        </div>
        <div class="section-head"><span class="fold"><svg><use href="#i-chev" /></svg></span><h3>控件</h3></div>
        <div class="objects">
          <svg><use href="#o-alarm" /></svg>
          <svg><use href="#o-trend" /></svg>
          <svg><use href="#o-user" /></svg>
          <svg><use href="#o-web" /></svg>
          <svg><use href="#o-recipe" /></svg>
          <svg><use href="#o-diag" /></svg>
        </div>
        <div class="section-head closed"><span class="fold"><svg><use href="#i-chev" /></svg></span><h3>图形</h3></div>
      </section>

      <nav class="right-rail">
        <button class="side-tab current"><svg class="icon"><use href="#t-tools" /></svg>工具箱</button>
        <button class="side-tab"><svg class="icon"><use href="#t-anim" /></svg>动画</button>
        <button class="side-tab"><svg class="icon"><use href="#t-layout" /></svg>布局</button>
        <button class="side-tab"><svg class="icon"><use href="#t-instr" /></svg>指令</button>
        <button class="side-tab"><svg class="icon"><use href="#t-task" /></svg>任务</button>
        <button class="side-tab short"><svg class="icon"><use href="#t-lib" /></svg>库</button>
      </nav>
    </main>

    <footer class="statusbar">
      <a class="portal-link" href="#"><svg><use href="#i-left" /></svg>Portal 视图</a>
      <button class="window-btn"><svg class="icon"><use href="#i-overview" /></svg>总览</button>
      <button class="window-btn"><svg class="icon"><use href="#i-screen" /></svg>根画面</button>
      <button class="window-btn active"><svg class="icon"><use href="#i-tpl" /></svg>模板_1</button>
      <div class="status">
        <svg class="layout-icon"><use href="#i-layout" /></svg>
        <p><svg class="ok"><use href="#i-ok" /></svg>项目 项目109 已成功保存。</p>
      </div>
    </footer>
    <div class="desk-bottom"><i></i><i></i><i></i></div>
  </body>
</html>
```
FILE: styles.css
```css
* {
  box-sizing: border-box;
}
body {
  margin: 0;
  height: 100vh;
  display: flex;
  flex-direction: column;
  overflow: hidden;
  font-family: "Noto Sans", "Noto Sans CJK SC", sans-serif;
  font-size: 15px;
  line-height: 20px;
  color: #222;
  background: #cbcbcb;
}
button,
input,
select {
  font: inherit;
  color: inherit;
  margin: 0;
  padding: 0;
  border: 0;
  background: none;
}
h2,
h3,
p,
ul {
  margin: 0;
  padding: 0;
}
svg {
  display: block;
  flex: none;
  fill: currentColor;
}
.sprite {
  position: absolute;
}
.icon {
  width: 20px;
  height: 20px;
}
.ico14 {
  width: 14px;
  height: 14px;
}

/* title bar */
.desk-top {
  height: 5px;
  flex: none;
  background: linear-gradient(90deg, #2a1830, #7a2c4c 15%, #30182c 30%, #6a2444 60%, #2a1428 85%, #8c2034);
  border-bottom: 3px solid #e6dfe3;
}
.titlebar {
  position: relative;
  flex: none;
  height: 30px;
  display: flex;
  align-items: center;
  padding: 0 4px 0 2px;
  background: linear-gradient(#8a8888, #555 9px, #1b1b1b 10px);
  color: #e2e2e2;
}
.app-title {
  margin-left: 7px;
  font-size: 16px;
  font-weight: 500;
}
.win-controls {
  margin-left: auto;
  display: flex;
  gap: 6px;
}
.rec {
  position: absolute;
  left: 11px;
  top: 14px;
  display: flex;
  align-items: center;
  gap: 15px;
  font-weight: 600;
  color: #fff;
  z-index: 2;
}
.rec-dot {
  width: 22px;
  height: 22px;
  border-radius: 50%;
  background: #fe0000;
}
.class-pill {
  position: absolute;
  left: 55%;
  top: -5px;
  width: 245px;
  height: 31px;
  display: flex;
  align-items: center;
  justify-content: center;
  padding: 0 0 6px 20px;
  background: #ededed;
  color: #333;
  white-space: pre;
}
.live-dot {
  width: 11px;
  height: 11px;
  margin-right: 10px;
  border-radius: 50%;
  background: #15c26b;
}
.pill-chev {
  width: 9px;
  height: 6px;
  margin-left: 4px;
  color: #666;
}

/* menu and main toolbar */
.command-area {
  flex: none;
  height: 61px;
  display: flex;
  justify-content: space-between;
  background: #cbcbcb;
  border-bottom: 1px solid #4a4a4a;
}
.menu {
  display: flex;
  gap: 20px;
  padding: 6px 0 0 9px;
}
.menu small {
  font-size: 14px;
}
.toolbar {
  display: flex;
  align-items: center;
}
.main-tools {
  height: 30px;
  padding: 2px 0 0 6px;
}
.tool {
  flex: none;
  width: 29px;
  height: 24px;
  display: flex;
  align-items: center;
  justify-content: center;
}
.split {
  width: 43px;
  gap: 3px;
}
.drop {
  width: 10px;
  height: 14px;
  color: #000;
}
.off,
.off .drop {
  color: #8c8c8c;
}
.text-tool {
  width: auto;
  padding: 0 8px 0 2px;
  gap: 7px;
  font-size: 16px;
}
.text-tool.online {
  padding: 0 5px 0 4px;
}
.sep {
  flex: none;
  width: 1px;
  height: 28px;
  margin: 0 2px;
  background: #b4b4b4;
}
.sep.wide {
  margin: 0 4px;
}
.more {
  width: 7px;
  height: 10px;
  margin: 5px 4px 0;
  align-self: flex-start;
  color: #111;
}
.main-tools .more {
  margin-top: 2px;
}
.brand {
  padding: 15px 27px 0 0;
  text-align: right;
  font-weight: 600;
}
.brand-name {
  padding-right: 29px;
  font-size: 16px;
  color: #333;
}
.brand-portal {
  font-size: 20px;
  line-height: 16px;
  color: #777;
}

/* work area */
.work {
  flex: 1;
  min-height: 0;
  display: grid;
  grid-template-columns: 25px 309px minmax(0, 1fr) 153px 28px;
  background: #aeaeae;
}
.left-rail {
  border-right: 1px solid #555;
  background: linear-gradient(#e4e4e4, #e4e4e4) 0 29px / 100% 1px no-repeat, linear-gradient(#e4e4e4, #e4e4e4) 0 298px / 100% 1px no-repeat, #aeaeae;
}
.rail-label {
  display: block;
  margin-top: 136px;
  writing-mode: vertical-rl;
  transform: rotate(180deg);
  text-orientation: sideways;
  font-size: 18px;
  line-height: 18px;
  font-weight: bold;
  color: #eee;
}
.panel-head {
  flex: none;
  height: 32px;
  padding: 0 9px 0 6px;
  display: flex;
  align-items: center;
  gap: 10px;
  background: #adadad;
  border-bottom: 3px solid #ececec;
  color: #fff;
}
.panel-head h2 {
  flex: 1;
  font-size: 18px;
  font-weight: bold;
  white-space: nowrap;
}
.head-arrow {
  width: 8px;
  height: 13px;
}
.tab-strip {
  flex: none;
  height: 32px;
  padding-left: 8px;
  background: #cacaca;
  border-bottom: 1px solid #777;
}
.tab {
  border: 1px solid #888;
  border-bottom: 0;
  background: linear-gradient(#f2f2f2, #e2e2e2 50%, #d0d0d0 51%, #dcdcdc);
  font-size: 18px;
  color: #555;
}
.device-tab {
  width: 76px;
  height: 27px;
  margin-top: 5px;
  padding: 0 14px 4px 0;
  background: #ececec;
  font-weight: bold;
  color: #111;
}
.toolbar.tree-tools,
.toolbar.format-tools,
.toolbar.box-tools {
  flex: none;
  height: 32px;
  background: #e9e9e9;
}
.push {
  margin-left: auto;
}
.col-head {
  flex: none;
  height: 23px;
  padding-left: 4px;
  line-height: 21px;
  background: linear-gradient(#e6e6e6, #d0d0d0 50%, #c4c4c4 52%, #dedede);
  border-top: 1px solid #aaa;
  border-bottom: 1px solid #b4b4b4;
}

/* project tree */
.tree-panel {
  min-height: 0;
  display: flex;
  flex-direction: column;
  background: #efefef;
}
.tree-panel .panel-head,
.toolbox .panel-head {
  background: linear-gradient(#a2a2a2, #b2b2b2);
}
.tree-tools {
  padding: 0 6px 0 3px;
}
.filler {
  flex: none;
  height: 26px;
  background: #c0c0c0;
}
.tree-area {
  position: relative;
  flex: 1;
  min-height: 0;
  display: flex;
  border-bottom: 4px solid #2a2c44;
}
.tree-main {
  flex: 1;
  overflow: hidden;
}
.tree {
  padding-top: 1px;
  list-style: none;
}
.tree li {
  height: 23px;
  display: flex;
  align-items: center;
  border-bottom: 2px solid #fafafa;
  background: #efefef;
}
.tree li::after {
  content: "";
  align-self: stretch;
  width: 24px;
  margin-left: auto;
  border-left: 1px solid #dcdcdc;
}
.tree .icon {
  width: 19px;
  height: 19px;
  margin-right: 4px;
}
.twist {
  width: 10px;
  height: 10px;
  margin: 0 7px 0 -17px;
  color: #111;
}
.lv1 {
  padding-left: 66px;
}
.lv2 {
  padding-left: 88px;
}
.lv3 {
  padding-left: 110px;
}
.tree .selected {
  background: #dde1e7;
  border-top: 1px dotted #888;
  border-bottom: 1px dotted #888;
}
.tree .selected::after {
  border-left: 1px dotted #888;
}
.mouse {
  position: absolute;
  left: 280px;
  top: 149px;
  width: 18px;
  height: 30px;
}

/* scroll bars */
.vscroll {
  flex: none;
  width: 20px;
  display: flex;
  flex-direction: column;
  background: #bdbdbd;
}
.tree-scroll {
  width: 21px;
}
.sbtn,
.thumb {
  flex: none;
  display: flex;
  align-items: center;
  justify-content: center;
  background: #ebebeb;
  border: 1px solid #b0b0b0;
}
.sbtn {
  height: 21px;
  color: #555;
}
.sbtn svg {
  width: 12px;
  height: 8px;
}
.up svg {
  transform: rotate(180deg);
}
.left svg {
  transform: rotate(90deg);
}
.right svg {
  transform: rotate(-90deg);
}
.thumb::after {
  content: "";
  width: 9px;
  height: 9px;
  background: repeating-linear-gradient(#777 0 1px, transparent 1px 3px);
}
.tree-before {
  height: 47px;
}
.tree-thumb {
  height: 126px;
}
.grow {
  flex: 1;
}
.canvas-before {
  flex: 107;
}
.canvas-thumb {
  flex: 347 1 auto;
}
.canvas-after {
  flex: 40;
}

/* detail view */
.section-head {
  flex: none;
  height: 26px;
  display: flex;
  align-items: center;
  background: linear-gradient(#ececec, #dcdcdc 50%, #cfcfcf 51%, #dadada);
  border-top: 2px solid #999;
  border-bottom: 1px solid #888;
  color: #111;
}
.section-head h3 {
  font-size: 18px;
  padding-left: 5px;
}
.fold {
  width: 25px;
  align-self: stretch;
  display: flex;
  align-items: center;
  justify-content: center;
  border-right: 1px solid #999;
}
.fold svg {
  width: 12px;
  height: 8px;
}
.closed .fold svg {
  transform: rotate(-90deg);
}
.detail-head {
  border-top: 0;
}
.detail-gap {
  flex: none;
  height: 30px;
  background: #cacaca;
  border-bottom: 1px solid #888;
}
.detail-tools {
  flex: none;
  height: 33px;
  background: #e9e9e9;
}
.detail-cols {
  display: grid;
  grid-template-columns: 22px 195px 1fr;
  padding: 0;
}
.detail-cols span {
  padding-left: 4px;
  border-right: 1px solid #b0b0b0;
}
.detail-rows {
  flex: none;
  height: 103px;
  background: repeating-linear-gradient(#efefef 0 21px, #fafafa 21px 23px);
}

/* editor */
.editor {
  min-height: 0;
  display: flex;
  flex-direction: column;
  border-left: 4px solid #2a2c44;
  border-right: 5px solid #2a2c44;
  background: #e9e9e9;
}
.editor-head {
  gap: 8px;
  padding-right: 6px;
  background: #2d3050;
}
.editor-head h2 {
  display: flex;
  align-items: center;
  font-weight: 500;
}
.device-name {
  font-size: 17px;
}
.editor-head h2 svg {
  width: 6px;
  height: 10px;
  margin: 0 12px;
}
.combo {
  flex: none;
  display: flex;
  height: 22px;
  border: 1px solid #999;
  background: #fff;
}
.combo input,
.combo select {
  flex: 1;
  min-width: 0;
  appearance: none;
}
.combo-arrow {
  width: 19px;
  display: flex;
  align-items: center;
  justify-content: center;
  background: linear-gradient(#ececec, #c8c8c8);
  border-left: 1px solid #999;
  color: #111;
}
.combo-arrow svg {
  width: 10px;
  height: 7px;
}
.format-tools {
  padding-left: 6px;
}
.font-combo {
  width: 138px;
  margin-right: 8px;
}
.list-btn {
  width: 20px;
  padding: 2px;
  background: #dcdcdc;
  border-left: 1px solid #999;
}
.list-btn svg {
  width: 14px;
  height: 16px;
}
.size-combo {
  width: 47px;
  margin-right: 5px;
}
.size-combo select {
  padding-left: 4px;
}
.letter {
  flex: none;
  width: 29px;
  font-size: 20px;
  color: #22226a;
}
.bold {
  font-weight: bold;
}
.italic {
  font-family: "Liberation Serif", serif;
  font-style: italic;
}
.under {
  text-decoration: underline;
}
.strike {
  text-decoration: line-through;
  color: #777;
}
.format-tools .split {
  padding-right: 2px;
}
.format-tools .icon {
  width: 19px;
  height: 19px;
}
.canvas-row {
  flex: 1;
  min-height: 0;
  display: flex;
}
.canvas {
  flex: 1;
  min-width: 0;
  display: flex;
  padding-left: 66px;
  overflow: hidden;
  background: #a2a5a8;
}
.device {
  flex: 1;
  min-width: 0;
  display: flex;
  flex-direction: column;
  padding-left: 62px;
  background: #778698;
}
.screen {
  flex: 1;
  display: flex;
  flex-direction: column;
  justify-content: space-between;
  background: radial-gradient(circle at 4px 4px, #707070 1px, transparent 1px) 0 0 / 8px 8px, #b9b9b9;
}
.screen-top {
  height: 16px;
  display: flex;
  overflow: hidden;
}
.logo {
  width: 174px;
  display: flex;
  gap: 4px;
  padding-left: 2px;
  background: #fff;
}
.logo svg {
  width: 42px;
  height: 14px;
}
.logo span {
  font-family: "DejaVu Sans", sans-serif;
  font-size: 10px;
  font-weight: bold;
  line-height: 13px;
}
.title-field {
  width: 496px;
  height: 6px;
  margin-left: 2px;
  background: #fff;
}
.clock {
  margin: -6px 0 0 auto;
  font-family: "Liberation Mono", monospace;
  font-size: 13px;
  line-height: 20px;
  color: #333;
}
.softkeys,
.fkeys {
  display: grid;
  grid-template-columns: repeat(8, 67px);
  gap: 30px;
  padding-left: 15px;
}
.softkeys {
  padding-bottom: 2px;
}
.softkey {
  height: 47px;
  display: flex;
  align-items: center;
  justify-content: center;
  background: linear-gradient(#f4f2f4, #e6e3e6 40%, #e4e0e4);
  border: 1px solid #cfcccf;
}
.softkey svg {
  width: 36px;
  height: 36px;
}
/* selection handles */
.picked {
  display: grid;
  grid-template-columns: repeat(3, 8px);
  justify-content: space-between;
  align-content: space-between;
  border: 0;
}
.picked i {
  width: 8px;
  height: 8px;
  border: 2px solid #4a8ad4;
  background: #e4f2ff;
}
.picked .mid {
  visibility: hidden;
}
.fkeys {
  flex: none;
  height: 103px;
  padding-top: 39px;
}
.fkey {
  width: 70px;
  padding: 8px 0 0 10px;
  background: #808080;
  border: solid;
  border-width: 5px 5px 0;
  border-color: #fff #000 #000 #fff;
  outline: 1px solid #222;
  font-family: "Liberation Sans", sans-serif;
  font-size: 21px;
  font-weight: bold;
  line-height: 20px;
  color: #1c1c1c;
}
.zoom-row {
  position: relative;
  flex: none;
  height: 26px;
  display: flex;
  background: #e9e9e9;
  border-bottom: 4px solid #2a2c44;
}
.hscroll {
  width: 584px;
  display: flex;
  background: #c6c6c6;
}
.hscroll .sbtn {
  width: 21px;
  height: auto;
}
.h-thumb {
  width: 471px;
}
.h-thumb::after {
  background: repeating-linear-gradient(90deg, #777 0 1px, transparent 1px 3px);
}
.hscroll .track {
  flex: 1;
}
.zoom-combo {
  width: 189px;
  margin-left: 8px;
  font-size: 14px;
}
.zoom-combo select {
  padding-left: 3px;
}
.zoom-slider {
  width: 84px;
  height: 20px;
  margin-left: 21px;
  background: repeating-linear-gradient(90deg, #666 0 2px, transparent 2px 5px) 0 100% / 100% 4px no-repeat;
}
.zoom-slider input {
  width: 100%;
  height: 18px;
  display: block;
  appearance: none;
  background: linear-gradient(#888, #888) 0 8px / 100% 1px no-repeat;
}
.zoom-slider input::-webkit-slider-thumb {
  appearance: none;
  width: 9px;
  height: 12px;
  border: 1px solid #888;
  border-radius: 0 0 4px 4px;
  background: #ddd;
}
.fit {
  width: 16px;
  height: 16px;
  margin: 2px 3px 0 auto;
}

/* inspector */
.info-tabs {
  flex: none;
  height: 33px;
  display: flex;
  align-items: flex-end;
  gap: 3px;
  background: #b0b0b0;
  border-bottom: 3px solid #ececec;
}
.info-tabs .tab {
  width: 90px;
  height: 26px;
  display: flex;
  align-items: center;
  gap: 3px;
  padding: 0 3px;
}
.info-tabs .tab:first-child {
  margin-left: auto;
}
.info-tabs .tab.active {
  width: 98px;
}
.tab.active {
  background: #ececec;
  font-weight: bold;
  color: #111;
}
.badge {
  width: 18px;
  height: 18px;
  margin-left: auto;
}
.info-controls {
  display: flex;
  gap: 8px;
  padding: 0 6px 8px 22px;
  color: #fff;
}
.sub-tabs {
  flex: none;
  height: 30px;
  display: flex;
  align-items: flex-end;
  gap: 3px;
  padding-left: 7px;
  background: #cacaca;
  border-bottom: 1px solid #999;
}
.sub-tabs .tab {
  height: 27px;
  display: flex;
  align-items: center;
  padding: 0 26px 0 12px;
}
.sub-tabs .badge {
  margin: 0 -21px 0 12px;
}
.message-tools {
  flex: none;
  height: 33px;
  display: flex;
  align-items: center;
  gap: 3px;
  padding-left: 4px;
}
.filter {
  width: 26px;
  height: 26px;
  display: flex;
  align-items: center;
  justify-content: center;
  background: #fff;
  border: 1px solid #6a90d8;
}
.message-combo {
  width: 242px;
  margin-left: 3px;
  font-size: 16px;
}
.message-combo select {
  padding-left: 5px;
}
.message-line {
  flex: none;
  height: 8px;
  padding-left: 13px;
  overflow: hidden;
}

/* toolbox */
.toolbox {
  min-height: 0;
  display: grid;
  grid-template-rows: 32px 32px 33px 26px minmax(0, 185fr) 26px minmax(0, 185fr) 26px minmax(0, 189fr) 26px;
  border-right: 1px solid #555;
  background: #efefef;
}
.toolbox .panel-head {
  padding-right: 8px;
}
.options-head {
  padding-left: 6px;
  line-height: 32px;
  font-size: 18px;
  font-weight: bold;
  color: #111;
  background: linear-gradient(#ececec 8px, #fff 8px, #dadada 20px, #e6e6e6);
  border-bottom: 1px solid #888;
}
.box-tools {
  padding: 0 3px;
}
.objects {
  display: grid;
  grid-template-columns: repeat(3, 1fr);
  grid-auto-rows: 36px;
  row-gap: 8px;
  justify-items: center;
  align-content: start;
  padding: 8px 2px 0 0;
}
.objects svg {
  width: 36px;
  height: 36px;
}

/* side tabs */
.right-rail {
  display: flex;
  flex-direction: column;
  gap: 4px;
  padding: 38px 3px 0 0;
}
.side-tab {
  flex: none;
  width: 25px;
  height: 88px;
  display: flex;
  flex-direction: column;
  align-items: center;
  gap: 3px;
  padding-top: 4px;
  border: 1px solid #888;
  background: #d6d6d6;
  font-size: 18px;
  line-height: 19px;
  color: #666;
  word-break: break-all;
}
.current {
  height: 107px;
  background: #f0f0f0;
  font-weight: bold;
  color: #222;
}
.short {
  height: 69px;
}

/* status bar */
.statusbar {
  flex: none;
  height: 36px;
  display: flex;
  align-items: center;
  gap: 4px;
  background: #1b1b1b;
}
.portal-link {
  width: 211px;
  display: flex;
  align-items: center;
  gap: 13px;
  padding-left: 38px;
  font-size: 18px;
  font-weight: 600;
  color: #eee;
  text-decoration: none;
}
.portal-link svg {
  width: 8px;
  height: 14px;
}
.window-btn {
  width: 137px;
  height: 25px;
  display: flex;
  align-items: center;
  gap: 7px;
  padding: 0 0 3px 3px;
  background: #c2c2c2;
  font-size: 16px;
}
.window-btn.active {
  background: #fff;
  font-weight: bold;
}
.status {
  margin-left: auto;
  width: 430px;
  height: 100%;
  display: flex;
  align-items: center;
  gap: 7px;
  color: #ddd;
}
.layout-icon {
  width: 24px;
  height: 24px;
}
.status p {
  height: 100%;
  display: flex;
  align-items: center;
  gap: 8px;
  padding-left: 6px;
  border-left: 1px solid #444;
}
.ok {
  width: 16px;
  height: 16px;
}
.desk-bottom {
  flex: none;
  height: 10px;
  display: flex;
  gap: 89px;
  padding-left: 209px;
  background: linear-gradient(90deg, #06122e 50%, #0a4a94 80%, #162a5c);
  border-top: 3px solid #e8e8e8;
}
.desk-bottom i {
  width: 20px;
  height: 3px;
  background: #d8dce4;
}
```
